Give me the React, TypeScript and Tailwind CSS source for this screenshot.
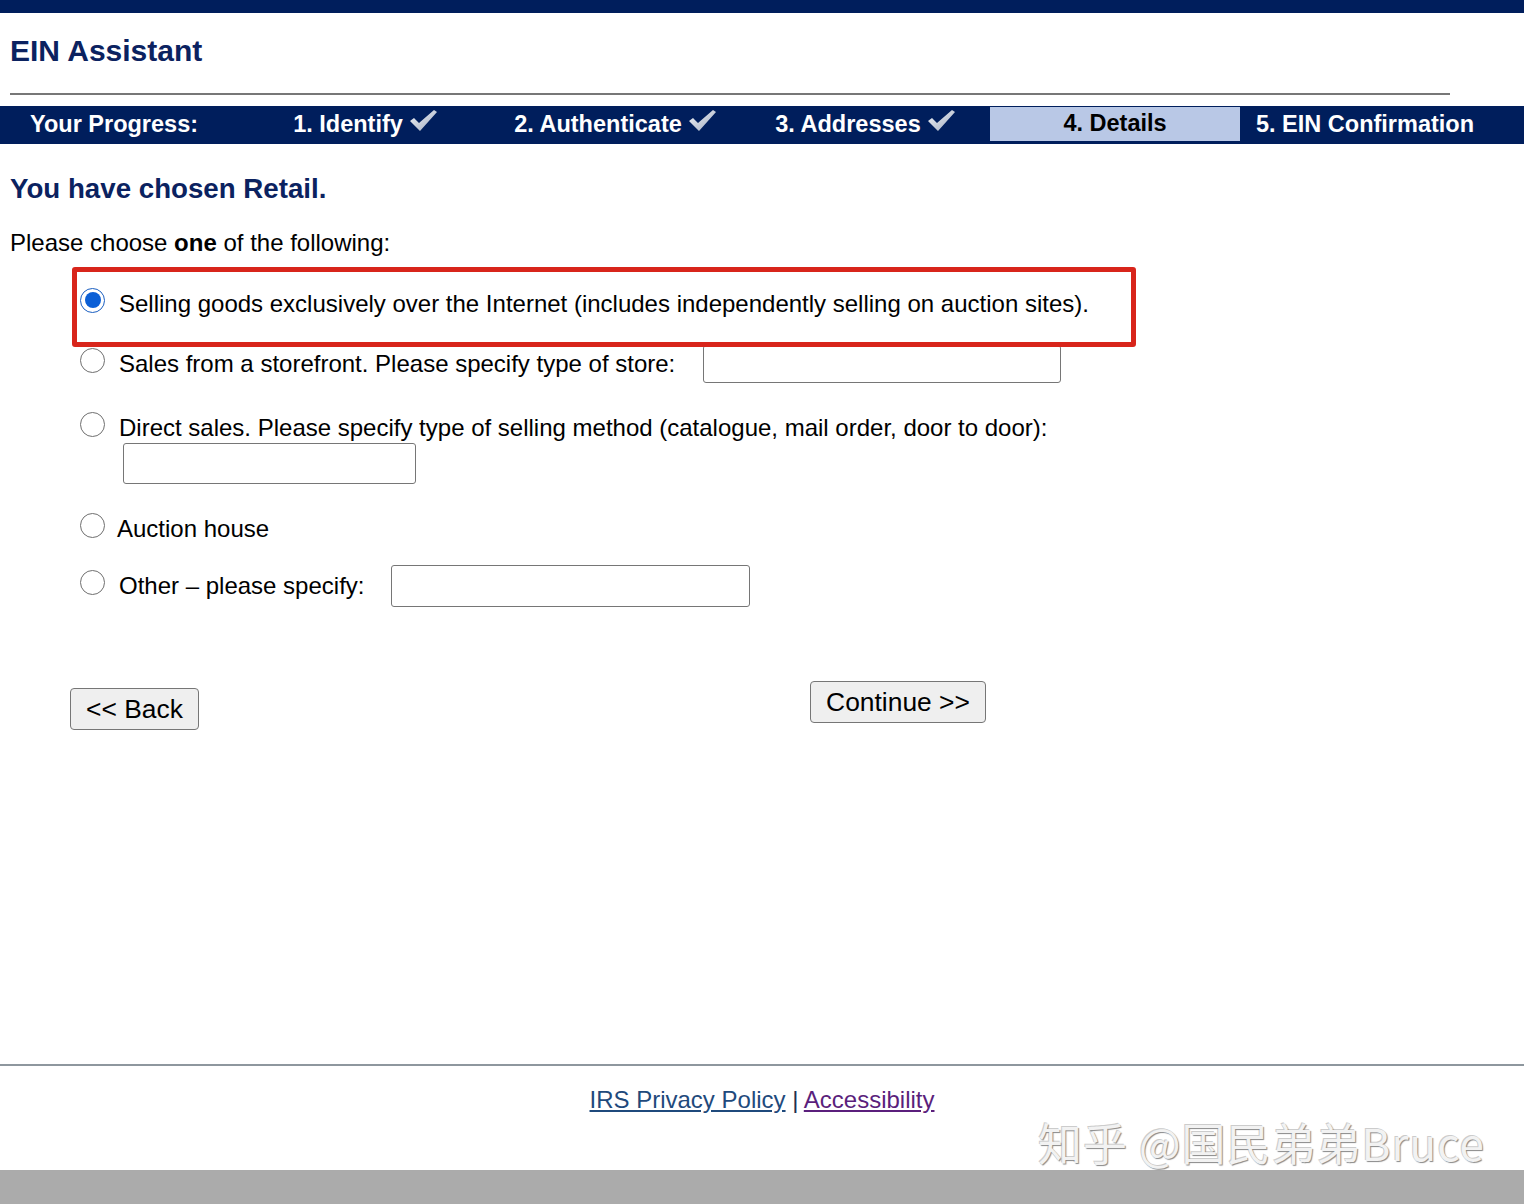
// EIN Assistant – Retail details step
const font = "font-['Liberation_Sans',Arial,sans-serif]";

function Check() {
  return (
    <svg width="27" height="21" viewBox="0 0 27 21" className="ml-[7px] -mt-[10px]">
      <defs>
        <linearGradient id="chk" x1="0" y1="0" x2="1" y2="1">
          <stop offset="0" stopColor="#f4f6fa" />
          <stop offset="1" stopColor="#9ea9bd" />
        </linearGradient>
      </defs>
      <polygon points="0,11 4,8 9,13 24,0 27,2 10,21" fill="url(#chk)" />
    </svg>
  );
}

function Radio({ checked }: { checked?: boolean }) {
  if (checked) {
    return (
      <div className="w-[25px] h-[25px] shrink-0 rounded-full border-[1.5px] border-[#1b5fc1] bg-white flex items-center justify-center">
        <div className="w-[16px] h-[16px] rounded-full bg-[#0b5fd6]" />
      </div>
    );
  }
  return <div className="w-[25px] h-[25px] shrink-0 rounded-full border-[1.5px] border-[#6f6f6f] bg-white" />;
}

function TextBox({ w, h }: { w: string; h: string }) {
  return <div className={`${w} ${h} border-[1.5px] border-[#767676] rounded-[3px] bg-white`} />;
}

const steps = [
  { label: "1. Identify", done: true },
  { label: "2. Authenticate", done: true },
  { label: "3. Addresses", done: true },
];

export default function App() {
  return (
    <div className={`relative min-h-screen bg-white text-black ${font}`}>
      <div className="h-[13px] bg-[#001e5c]" />

      <h1 className="pl-[10px] pt-[21px] text-[30px] leading-[34px] font-bold text-[#0b2260]">EIN Assistant</h1>
      <div className="mt-[25px] ml-[10px] w-[1440px] h-[2px] bg-[#777777]" />

      {/* progress bar */}
      <div className="mt-[11px] h-[38px] bg-[#001e5c] flex items-stretch text-white font-bold text-[23.5px]">
        <div className="w-[240px] pl-[30px] flex items-center">Your Progress:</div>
        {steps.map((s) => (
          <div key={s.label} className="w-[250px] flex items-center justify-center">
            <span>{s.label}</span>
            {s.done && <Check />}
          </div>
        ))}
        <div className="w-[250px] mt-px mb-[3px] bg-[#b9c8e6] text-black flex items-center justify-center">4. Details</div>
        <div className="w-[250px] flex items-center justify-center">5. EIN Confirmation</div>
      </div>

      <h2 className="pl-[10px] mt-[29px] text-[27.7px] leading-[32px] font-bold text-[#0b2260]">You have chosen Retail.</h2>
      <p className="pl-[10px] mt-[24px] text-[24px] leading-[28px]">
        Please choose <b>one</b> of the following:
      </p>

      {/* options */}
      <div className="pl-[80px] mt-[33px] text-[24px] leading-[28px]">
        <div className="flex items-center h-[28px]">
          <div className="-mt-[8px]"><Radio checked /></div>
          <span className="ml-[14px]">Selling goods exclusively over the Internet (includes independently selling on auction sites).</span>
        </div>

        <div className="flex items-center mt-[27px]">
          <div className="-mt-[8px]"><Radio /></div>
          <span className="ml-[14px]">Sales from a storefront. Please specify type of store:</span>
          <div className="ml-[28px]"><TextBox w="w-[358px]" h="h-[38px]" /></div>
        </div>

        <div className="mt-[31px]">
          <div className="flex items-center h-[28px]">
            <div className="-mt-[8px]"><Radio /></div>
            <span className="ml-[14px]">Direct sales. Please specify type of selling method (catalogue, mail order, door to door):</span>
          </div>
          <div className="ml-[43px] mt-px"><TextBox w="w-[293px]" h="h-[41px]" /></div>
        </div>

        <div className="flex items-center h-[28px] mt-[31px]">
          <div className="-mt-[8px]"><Radio /></div>
          <span className="ml-[12px]">Auction house</span>
        </div>

        <div className="flex items-center mt-[22px]">
          <div className="-mt-[8px]"><Radio /></div>
          <span className="ml-[14px]">Other – please specify:</span>
          <div className="ml-[27px]"><TextBox w="w-[359px]" h="h-[42px]" /></div>
        </div>
      </div>

      {/* buttons */}
      <div className="flex items-start mt-[74px] text-[26.4px] leading-[30px]">
        <button className="ml-[70px] mt-[7px] w-[129px] h-[42px] bg-[#efefef] border-[1.5px] border-[#767676] rounded-[4px]">&lt;&lt; Back</button>
        <button className="ml-[611px] w-[176px] h-[42px] bg-[#efefef] border-[1.5px] border-[#767676] rounded-[4px]">Continue &gt;&gt;</button>
      </div>

      {/* footer */}
      <div className="mt-[334px] h-[2px] bg-[#8e979e]" />
      <div className="mt-[20px] text-center text-[24px] leading-[28px]">
        <a href="#" className="underline text-[#1f4a7c]">IRS Privacy Policy</a>
        <span className="text-[#1f3050]"> | </span>
        <a href="#" className="underline text-[#5b1f7c]">Accessibility</a>
      </div>
      <div className="h-[56px] flex items-center justify-end pr-[39px]">
        <span className="font-['Noto_Sans_CJK_SC',sans-serif] text-[44px] leading-[56px] tracking-[1px] text-[#f2f2f2] [text-shadow:1px_1px_1px_#888,-1px_-1px_0_#ccc]">
          知乎 @国民弟弟Bruce
        </span>
      </div>
      <div className="h-[34px] bg-[#ababab]" />

      {/* highlight annotation */}
      <div className="absolute left-[72px] top-[267px] w-[1064px] h-[80px] border-[5px] border-[#d8251b] rounded-[3px] pointer-events-none" />
    </div>
  );
}
